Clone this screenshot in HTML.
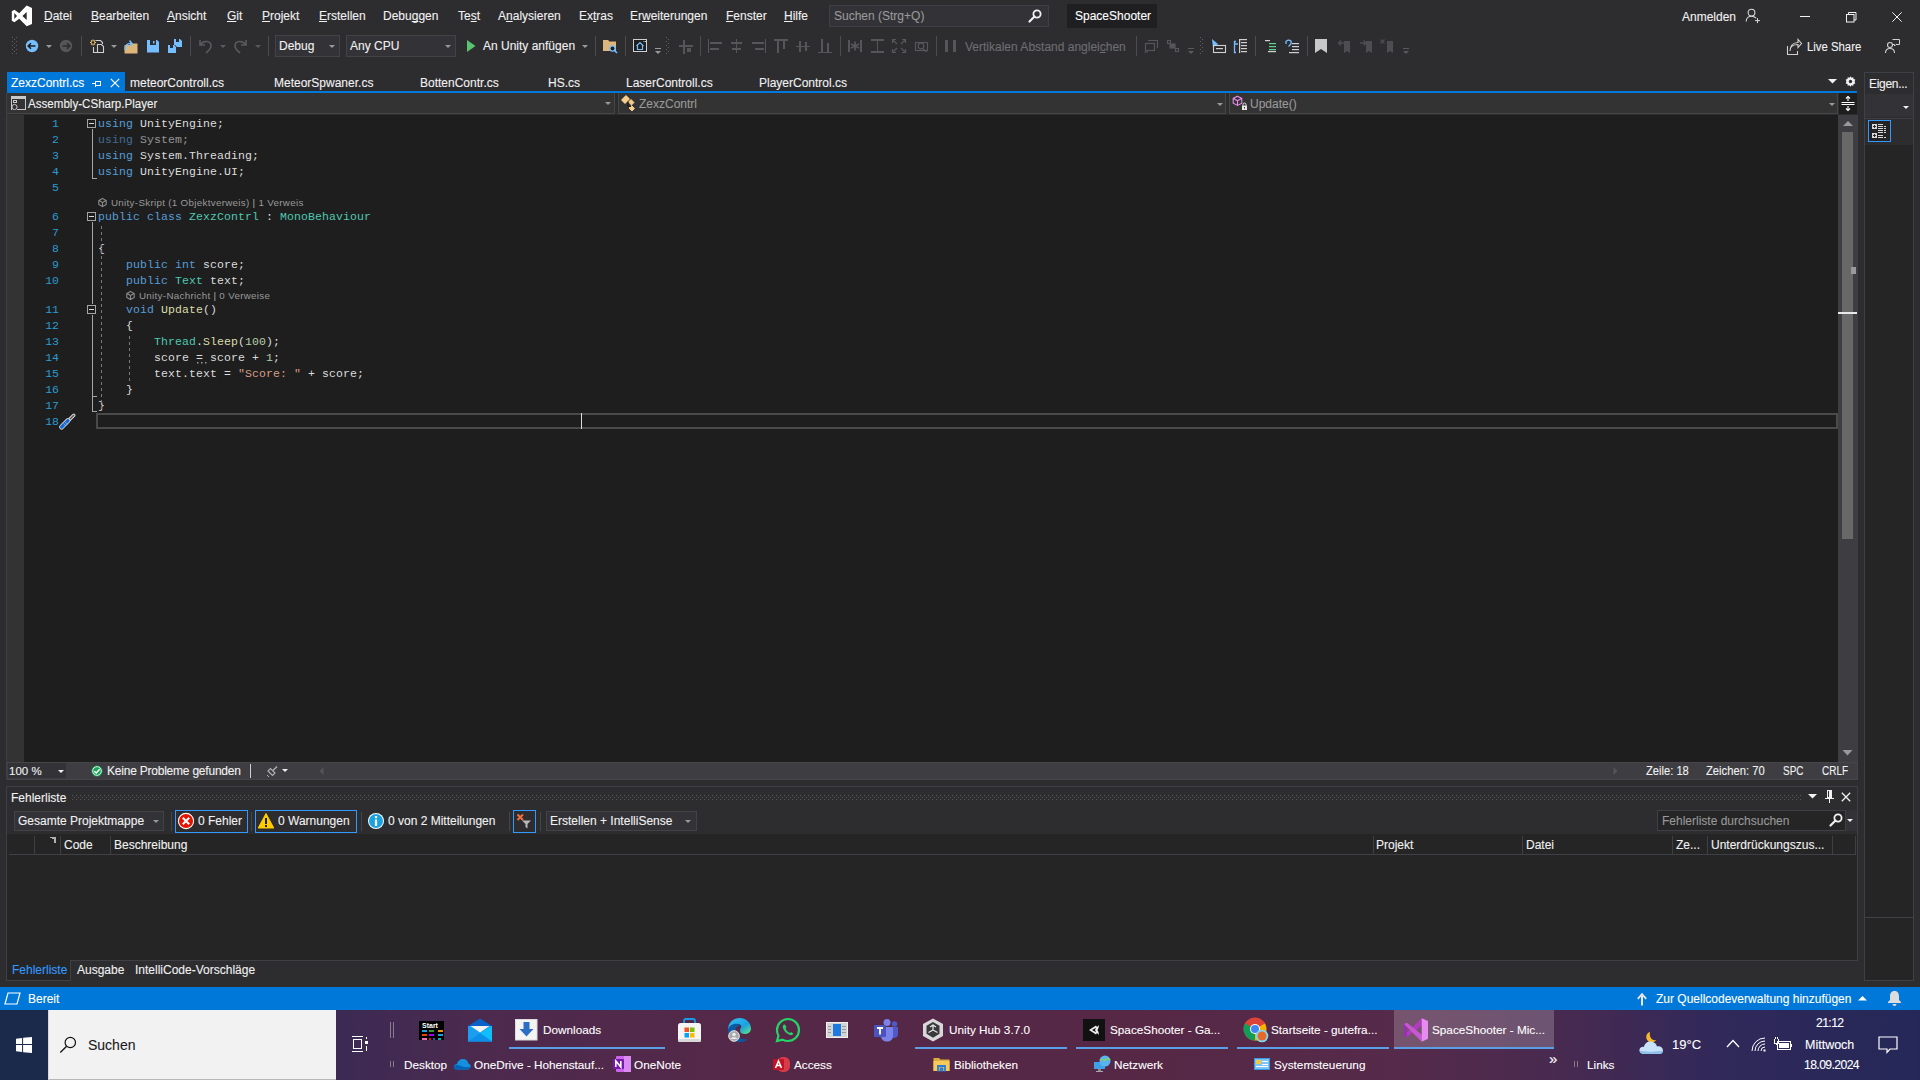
<!DOCTYPE html>
<html><head><meta charset="utf-8">
<style>
*{margin:0;padding:0;box-sizing:border-box}
html,body{width:1920px;height:1080px;overflow:hidden;background:#2d2d30;font-family:"Liberation Sans",sans-serif;font-size:12px;color:#f1f1f1}
.a{position:absolute}
.t{position:absolute;white-space:nowrap;line-height:14px;-webkit-text-stroke:0.1px currentColor}
.u{text-decoration:underline;text-underline-offset:1px;text-decoration-skip-ink:none}
.mono{font-family:"Liberation Mono",monospace}
svg{position:absolute;overflow:visible}
.sep{position:absolute;width:1px;background:#3f3f46}
.code .l{position:absolute;left:98px;white-space:pre;font-family:"Liberation Mono",monospace;font-size:11.5px;letter-spacing:0.1px;line-height:16px;color:#dcdcdc;margin-top:1px}
.ln{position:absolute;left:24px;width:35px;text-align:right;font-family:"Liberation Mono",monospace;font-size:11.5px;line-height:16px;color:#2b9bd0;margin-top:1px}
.kw{color:#569cd6}.ty{color:#4ec9b0}.me{color:#dcdcaa}.st{color:#d69d85}.nu{color:#b5cea8}.dim{opacity:.6}
.lens{position:absolute;font-size:9.8px;letter-spacing:0.3px;color:#999;white-space:nowrap;line-height:12px}
</style></head><body>

<!-- ============ TITLE / MENU BAR ============ -->
<div class="a" style="left:0;top:0;width:1920px;height:31px;background:#2d2d30"></div>
<svg style="left:0;top:0" width="40" height="32" viewBox="0 0 40 32"><path d="M26.7 5.6 L32 7.9 V24.1 L26.7 26.2 L19.2 18.7 L14.4 22.2 L11.8 20.8 V11.2 L14.4 9.8 L19.2 13.2 Z M26.7 12 L22.4 15.9 L26.7 19.9 Z M14.3 13 V18.9 L17 16 Z" fill="#fff" fill-rule="evenodd"/></svg>
<div class="t" style="left:44px;top:9px"><span class="u">D</span>atei</div>
<div class="t" style="left:91px;top:9px"><span class="u">B</span>earbeiten</div>
<div class="t" style="left:167px;top:9px"><span class="u">A</span>nsicht</div>
<div class="t" style="left:227px;top:9px"><span class="u">G</span>it</div>
<div class="t" style="left:262px;top:9px"><span class="u">P</span>rojekt</div>
<div class="t" style="left:319px;top:9px"><span class="u">E</span>rstellen</div>
<div class="t" style="left:383px;top:9px">Debu<span class="u">g</span>gen</div>
<div class="t" style="left:458px;top:9px">Te<span class="u">s</span>t</div>
<div class="t" style="left:498px;top:9px">A<span class="u">n</span>alysieren</div>
<div class="t" style="left:579px;top:9px">Ex<span class="u">t</span>ras</div>
<div class="t" style="left:630px;top:9px">Er<span class="u">w</span>eiterungen</div>
<div class="t" style="left:726px;top:9px"><span class="u">F</span>enster</div>
<div class="t" style="left:784px;top:9px"><span class="u">H</span>ilfe</div>
<!-- search -->
<div class="a" style="left:829px;top:5px;width:220px;height:22px;background:#333337;border:1px solid #3f3f46"></div>
<div class="t" style="left:834px;top:9px;color:#999999">Suchen (Strg+Q)</div>
<svg style="left:1028px;top:9px" width="14" height="14" viewBox="0 0 14 14"><circle cx="9" cy="5" r="3.6" fill="none" stroke="#f1f1f1" stroke-width="1.8"/><path d="M6.5 7.5 L1.5 12.5" stroke="#f1f1f1" stroke-width="2.2" stroke-linecap="round"/></svg>
<div class="a" style="left:1067px;top:4px;width:90px;height:24px;background:#1f1f22"></div>
<div class="t" style="left:1075px;top:9px;color:#fff">SpaceShooter</div>
<div class="t" style="left:1682px;top:10px">Anmelden</div>
<svg style="left:1745px;top:8px" width="16" height="16" viewBox="0 0 16 16"><circle cx="6.5" cy="4.6" r="3.4" fill="none" stroke="#d8d8d8" stroke-width="1.1"/><path d="M1.2 13.5 C1.2 10 3.5 8.3 6.5 8.3 C8.5 8.3 10 9 11 10.2" fill="none" stroke="#d8d8d8" stroke-width="1.1"/><path d="M10 12.6 H15 M12.5 10.1 V15.1" stroke="#d8d8d8" stroke-width="1"/></svg>
<div class="a" style="left:1800px;top:16px;width:10px;height:1px;background:#f1f1f1"></div>
<svg style="left:1846px;top:12px" width="11" height="11" viewBox="0 0 11 11"><rect x="0.5" y="2.5" width="7.5" height="7.5" fill="none" stroke="#f1f1f1"/><path d="M2.5 2.5 V0.5 H10 V8 H8" fill="none" stroke="#f1f1f1"/></svg>
<svg style="left:1892px;top:12px" width="10" height="10" viewBox="0 0 10 10"><path d="M0.3 0.3 L9.7 9.7 M9.7 0.3 L0.3 9.7" stroke="#f1f1f1" stroke-width="1"/></svg>

<!-- ============ TOOLBAR ============ -->
<!-- ============ TOOLBAR ============ -->
<svg style="left:0;top:0" width="1920" height="64" viewBox="0 0 1920 64" shape-rendering="crispEdges">
<g fill="#5f5f62">
<rect x="12" y="37" width="1" height="1"/><rect x="16" y="37" width="1" height="1"/><rect x="14" y="39" width="1" height="1"/>
<rect x="12" y="41" width="1" height="1"/><rect x="16" y="41" width="1" height="1"/><rect x="14" y="43" width="1" height="1"/>
<rect x="12" y="45" width="1" height="1"/><rect x="16" y="45" width="1" height="1"/><rect x="14" y="47" width="1" height="1"/>
<rect x="12" y="49" width="1" height="1"/><rect x="16" y="49" width="1" height="1"/><rect x="14" y="51" width="1" height="1"/>
<rect x="12" y="53" width="1" height="1"/><rect x="16" y="53" width="1" height="1"/>
</g>
<g fill="#4b4b50">
<rect x="81" y="36" width="1" height="20"/><rect x="190" y="36" width="1" height="20"/><rect x="268" y="36" width="1" height="20"/>
<rect x="595" y="36" width="1" height="20"/><rect x="625" y="36" width="1" height="20"/><rect x="700" y="36" width="1" height="20"/>
<rect x="840" y="36" width="1" height="20"/><rect x="936" y="36" width="1" height="20"/><rect x="1136" y="36" width="1" height="20"/>
<rect x="1255" y="36" width="1" height="20"/><rect x="1307" y="36" width="1" height="20"/>
</g>
<!-- grip 2 & 3 -->
<g fill="#5f5f62">
<rect x="666" y="37" width="1" height="1"/><rect x="668" y="39" width="1" height="1"/><rect x="666" y="41" width="1" height="1"/><rect x="668" y="43" width="1" height="1"/><rect x="666" y="45" width="1" height="1"/><rect x="668" y="47" width="1" height="1"/><rect x="666" y="49" width="1" height="1"/><rect x="668" y="51" width="1" height="1"/><rect x="666" y="53" width="1" height="1"/>
<rect x="1200" y="37" width="1" height="1"/><rect x="1202" y="39" width="1" height="1"/><rect x="1200" y="41" width="1" height="1"/><rect x="1202" y="43" width="1" height="1"/><rect x="1200" y="45" width="1" height="1"/><rect x="1202" y="47" width="1" height="1"/><rect x="1200" y="49" width="1" height="1"/><rect x="1202" y="51" width="1" height="1"/><rect x="1200" y="53" width="1" height="1"/>
</g>
</svg>
<svg style="left:0;top:0" width="1920" height="64" viewBox="0 0 1920 64">
<!-- back / forward -->
<circle cx="32" cy="46" r="6.2" fill="#75beff"/>
<path d="M35.5 46 H28.5 M31 43.2 L28.2 46 L31 48.8" fill="none" stroke="#1e1e1e" stroke-width="1.6"/>
<circle cx="66" cy="46" r="6.2" fill="#555558"/>
<path d="M62.5 46 H69.5 M67 43.2 L69.8 46 L67 48.8" fill="none" stroke="#2d2d30" stroke-width="1.6"/>
<!-- dropdown arrows -->
<g fill="#999999">
<path d="M46 45 H52 L49 48 Z"/><path d="M111 45 H117 L114 48 Z"/>
</g>
<g fill="#5a5a5e">
<path d="M220 45 H226 L223 48 Z"/><path d="M255 45 H261 L258 48 Z"/>
</g>
<!-- new project -->
<g fill="none" stroke="#d0d0d0" stroke-width="1.1">
<path d="M93.5 47 V52.5 H98" /><path d="M97.5 44.5 V52.5 H103.5 V46.5 L101.5 44.5 Z"/><path d="M95.5 40.5 H100.5 L102.5 42.5 V44"/>
</g>
<g stroke="#f2c46a" stroke-width="1.1"><path d="M90 42.5 H96 M93 39.5 V45.5 M91 40.5 L95 44.5 M95 40.5 L91 44.5"/></g>
<circle cx="93" cy="42.5" r="1.3" fill="#1e1e1e"/>
<!-- open folder -->
<path d="M124.5 45 H131 L132.5 43.5 H137.5 V53.5 H124.5 Z" fill="#dcb67a"/>
<path d="M125 50 Q125 43 131 43.5 M129.5 40.5 L132 43.5 L129.5 46" fill="none" stroke="#75beff" stroke-width="1.4"/>
<!-- save -->
<path d="M147 40 H150 V45 H156 V40 H157 L159 42 V52.5 H147 Z" fill="#75beff"/>
<rect x="153" y="41" width="1.5" height="2.5" fill="#75beff"/>
<!-- save all -->
<path d="M168 45 H170 V48 H173 V45 H174 L176 47 V53 H168 Z" fill="#75beff"/>
<path d="M174 39 H176 V42 H179 V39 H180 L182 41 V47 H177 L175 45 H174 Z" fill="#75beff"/>
<!-- undo / redo -->
<path d="M200 40 V45 H205 M200.5 44.5 C203 40.5 211 40 211 46 C211 49 208 51 206 53" fill="none" stroke="#5a5a5e" stroke-width="1.6"/>
<path d="M246 40 V45 H241 M245.5 44.5 C243 40.5 235 40 235 46 C235 49 238 51 240 53" fill="none" stroke="#5a5a5e" stroke-width="1.6"/>
<!-- play -->
<path d="M467 40 L475.5 46 L467 52 Z" fill="#58c46e"/>
<path d="M582 45 H588 L585 48 Z" fill="#999"/>
<!-- folder search -->
<path d="M603 40 H608 L609.5 41.5 H616 V51 H603 Z" fill="#dcb67a"/>
<circle cx="612.5" cy="48.5" r="2.6" fill="#1e1e1e" stroke="#75beff" stroke-width="1.3"/>
<path d="M614.3 50.3 L617 53" stroke="#75beff" stroke-width="1.6"/>
<!-- home box -->
<rect x="633.5" y="39.5" width="13" height="12" fill="#1e1e1e" stroke="#d0d0d0" stroke-width="1"/>
<path d="M636.5 46 L640 42.5 L643.5 46 M637.5 45.5 V49.5 H642.5 V45.5" fill="none" stroke="#75beff" stroke-width="1.2"/>
<rect x="643.5" y="41" width="1" height="1" fill="#d0d0d0"/><rect x="645" y="41" width="1" height="1" fill="#d0d0d0"/>
<!-- small dropdown with line -->
<g fill="#999"><rect x="655" y="48" width="6" height="1"/><path d="M655 51 H661 L658 54 Z"/></g>
<g fill="#5a5a5e"><rect x="1188" y="48" width="6" height="1"/><path d="M1188 51 H1194 L1191 54 Z"/>
<rect x="1403" y="48" width="6" height="1"/><path d="M1403 51 H1409 L1406 54 Z"/></g>
<!-- grey design icons -->
<g fill="#55555a">
<rect x="679" y="45" width="14" height="2"/><rect x="683" y="40" width="2" height="14"/><rect x="687" y="48" width="4" height="4"/>
<rect x="708" y="39" width="1" height="14"/><rect x="710" y="42" width="12" height="2"/><rect x="710" y="48" width="9" height="2"/>
<rect x="736" y="39" width="1" height="14"/><rect x="731" y="42" width="11" height="2"/><rect x="732" y="48" width="9" height="2"/>
<rect x="765" y="39" width="1" height="14"/><rect x="752" y="42" width="12" height="2"/><rect x="755" y="48" width="9" height="2"/>
<rect x="774" y="39" width="14" height="2"/><rect x="777" y="41" width="2" height="12"/><rect x="783" y="41" width="2" height="8"/>
<rect x="796" y="46" width="14" height="1"/><rect x="799" y="41" width="2" height="11"/><rect x="805" y="42" width="2" height="9"/>
<rect x="818" y="52" width="14" height="1"/><rect x="821" y="39" width="2" height="13"/><rect x="827" y="43" width="2" height="9"/>
<rect x="848" y="40" width="2" height="12"/><rect x="860" y="40" width="2" height="12"/>
<rect x="871" y="39" width="13" height="2"/><rect x="871" y="51" width="13" height="2"/><rect x="877" y="41" width="1" height="10"/>
<rect x="945" y="40" width="3" height="12"/><rect x="953" y="40" width="3" height="12"/>
</g>
<path d="M855 41.5 V50.5 M851 44 L859 48 M859 44 L851 48" stroke="#55555a" stroke-width="1.8"/>
<g fill="none" stroke="#55555a" stroke-width="1.2">
<path d="M892.5 43 V39.5 H896 M902 39.5 H905.5 V43 M905.5 49 V52.5 H902 M896 52.5 H892.5 V49 M893 40 L897 44 M905 40 L901 44 M893 52 L897 48 M905 52 L901 48"/>
<rect x="915.5" y="42.5" width="12" height="8"/><circle cx="921" cy="46" r="2.8"/><path d="M923 48.5 L926.5 52"/>
<rect x="1145.5" y="43.5" width="9" height="7"/><path d="M1148 40.5 H1157.5 V48"/><path d="M1144.5 52 H1148"/>
<rect x="1167.5" y="40.5" width="3" height="3"/><rect x="1175.5" y="48.5" width="3" height="3"/><rect x="1170" y="44" width="5" height="4" fill="#55555a"/>
</g>

<path d="M1315 39 H1327 V53 L1321 49 L1315 53 Z" fill="#c8c8c8"/>
<g fill="#4e4e52">
<path d="M1344 41 H1350 V53 L1347 51 L1344 53 Z"/><path d="M1366 41 H1372 V53 L1369 51 L1366 53 Z"/><path d="M1387 41 H1393 V53 L1390 51 L1387 53 Z"/>
</g>
<g fill="none" stroke="#4e4e52" stroke-width="1.3">
<path d="M1345 43 H1338.5 M1341 40.5 L1338.5 43 L1341 45.5"/><path d="M1360 43 H1366 M1363.5 40.5 L1366 43 L1363.5 45.5"/><path d="M1380.5 39.5 L1384.5 43.5 M1384.5 39.5 L1380.5 43.5"/>
</g>
<!-- cursor icon -->
<path d="M1212 39 L1218.5 44.5 L1215.5 45 L1213 47.5 Z" fill="#75beff"/>
<rect x="1213.5" y="45.5" width="12" height="7" fill="none" stroke="#d0d0d0" stroke-width="1.1"/><rect x="1216" y="48" width="7" height="1.2" fill="#d0d0d0"/>
<path d="M1236 41.5 H1234.5 V52.5 H1236 M1234.5 44 H1238" fill="none" stroke="#75beff" stroke-width="1.3"/>
<g fill="#d0d0d0"><rect x="1239" y="39" width="1.2" height="14"/><rect x="1240" y="39" width="7" height="1.2"/><rect x="1241" y="42" width="6" height="1.2"/><rect x="1241" y="45" width="6" height="1.2"/><rect x="1241" y="48" width="6" height="1.2"/><rect x="1241" y="51" width="6" height="1.2"/></g>
<g fill="#d0d0d0"><rect x="1265" y="40" width="5" height="1.2"/><rect x="1268" y="51" width="8" height="1.2"/></g>
<g fill="#5fd38d"><rect x="1269" y="43" width="7" height="1.2"/><rect x="1269" y="46" width="7" height="1.2"/><rect x="1269" y="49" width="7" height="1.2"/></g>
<path d="M1286 41.5 C1289 39 1292 40.5 1291 43.5 C1290.5 45 1289 45.5 1288.5 46.5 M1286 41 V44" fill="none" stroke="#75beff" stroke-width="1.3"/>
<g fill="#d0d0d0"><rect x="1292" y="43" width="7" height="1.2"/><rect x="1292" y="46" width="7" height="1.2"/><rect x="1292" y="49" width="7" height="1.2"/><rect x="1289" y="52" width="10" height="1.2"/></g>
<!-- live share -->
<path d="M1787.5 46 V54.5 H1797.5 V51" fill="none" stroke="#d0d0d0" stroke-width="1.1"/>
<path d="M1790 51 C1790 46 1794 44.5 1798 44.5 V47.5 L1801.5 43.5 L1798 39.5 V42.5 C1793 42.5 1790 46 1790 51 Z" fill="none" stroke="#d0d0d0" stroke-width="1.1"/>
<!-- feedback -->
<circle cx="1890" cy="45" r="2.5" fill="none" stroke="#d0d0d0" stroke-width="1.1"/>
<path d="M1885.5 53 C1885.5 49.5 1887.5 48.5 1890 48.5 C1892.5 48.5 1894.5 49.5 1894.5 53" fill="none" stroke="#d0d0d0" stroke-width="1.1"/>
<path d="M1892.5 39.5 H1899.5 V44.5 H1896 L1894.5 46 V44.5 H1892.5" fill="none" stroke="#d0d0d0" stroke-width="1"/>
</svg>
<div class="a" style="left:275px;top:35px;width:65px;height:22px;background:#333337;border:1px solid #434346"></div>
<div class="t" style="left:279px;top:39px">Debug</div>
<svg style="left:329px;top:45px" width="7" height="4"><path d="M0 0 H6 L3 3 Z" fill="#999"/></svg>
<div class="a" style="left:346px;top:35px;width:110px;height:22px;background:#333337;border:1px solid #434346"></div>
<div class="t" style="left:350px;top:39px">Any CPU</div>
<svg style="left:445px;top:45px" width="7" height="4"><path d="M0 0 H6 L3 3 Z" fill="#999"/></svg>
<div class="t" style="left:483px;top:39px">An Unity anfügen</div>
<div class="t" style="left:965px;top:40px;color:#6d6d70">Vertikalen Abstand anglei<span class="u">c</span>hen</div>
<div class="t" style="left:1807px;top:40px;transform:scaleX(0.946);transform-origin:0 0">Live Share</div>


<!-- ============ RIGHT PANEL ============ -->
<div class="a" style="left:1864px;top:72px;width:50px;height:909px;background:#252526;border:1px solid #3f3f46"></div>
<div class="a" style="left:1865px;top:73px;width:48px;height:72px;background:#2d2d30"></div>
<!-- ============ TABS ============ -->
<div class="a" style="left:7px;top:72px;width:118px;height:21px;background:#0078d9"></div>
<div class="t" style="left:11px;top:76px;color:#fff">ZexzContrl.cs</div>
<div class="t" style="left:130px;top:76px">meteorControll.cs</div>
<div class="t" style="left:274px;top:76px">MeteorSpwaner.cs</div>
<div class="t" style="left:420px;top:76px">BottenContr.cs</div>
<div class="t" style="left:548px;top:76px">HS.cs</div>
<div class="t" style="left:626px;top:76px">LaserControll.cs</div>
<div class="t" style="left:759px;top:76px">PlayerControl.cs</div>
<div class="a" style="left:7px;top:91px;width:1850px;height:2px;background:#0078d9"></div>

<!-- ============ NAV BAR ============ -->
<div class="a" style="left:7px;top:93px;width:1850px;height:22px;background:#2d2d30"></div>
<div class="a" style="left:7px;top:93px;width:608px;height:21px;background:#333333;border-right:1px solid #464646;border-bottom:1px solid #464646"></div>
<div class="a" style="left:618px;top:93px;width:608px;height:21px;background:#333333;border-left:1px solid #464646;border-right:1px solid #464646;border-bottom:1px solid #464646"></div>
<div class="a" style="left:1229px;top:93px;width:609px;height:21px;background:#333333;border-left:1px solid #464646;border-right:1px solid #464646;border-bottom:1px solid #464646"></div>
<div class="a" style="left:1839px;top:93px;width:18px;height:21px;background:#1e1e1e"></div>
<div class="t" style="left:28px;top:97px;transform:scaleX(0.965);transform-origin:0 0">Assembly-CSharp.Player</div>
<div class="t" style="left:639px;top:97px;color:#999">ZexzContrl</div>
<div class="t" style="left:1250px;top:97px;color:#999">Update()</div>

<!-- ============ EDITOR ============ -->
<div class="a" style="left:6px;top:93px;width:1px;height:687px;background:#3f3f46"></div>
<div class="a" style="left:7px;top:115px;width:17px;height:647px;background:#333333"></div>
<div class="a" style="left:24px;top:115px;width:1814px;height:647px;background:#1e1e1e"></div>
<div class="a" style="left:1838px;top:115px;width:20px;height:647px;background:#3e3e42"></div>
<div class="code">
<!-- line numbers -->
<div class="ln" style="top:115px">1</div>
<div class="ln" style="top:131px">2</div>
<div class="ln" style="top:147px">3</div>
<div class="ln" style="top:163px">4</div>
<div class="ln" style="top:179px">5</div>
<div class="ln" style="top:208px">6</div>
<div class="ln" style="top:224px">7</div>
<div class="ln" style="top:240px">8</div>
<div class="ln" style="top:256px">9</div>
<div class="ln" style="top:272px">10</div>
<div class="ln" style="top:301px">11</div>
<div class="ln" style="top:317px">12</div>
<div class="ln" style="top:333px">13</div>
<div class="ln" style="top:349px">14</div>
<div class="ln" style="top:365px">15</div>
<div class="ln" style="top:381px">16</div>
<div class="ln" style="top:397px">17</div>
<div class="ln" style="top:413px">18</div>
<!-- current line box -->
<div class="a" style="left:96px;top:413px;width:1742px;height:16px;border:2px solid #4a4a4a"></div>
<div class="a" style="left:581px;top:413px;width:1px;height:16px;background:#dcdcdc"></div>
<!-- code -->
<div class="l" style="top:115px"><span class="kw">using</span> UnityEngine;</div>
<div class="l" style="top:131px;opacity:.62"><span class="kw">using</span> System;</div>
<div class="l" style="top:147px"><span class="kw">using</span> System.Threading;</div>
<div class="l" style="top:163px"><span class="kw">using</span> UnityEngine.UI;</div>
<div class="l" style="top:208px"><span class="kw">public</span> <span class="kw">class</span> <span class="ty">ZexzContrl</span> : <span class="ty">MonoBehaviour</span></div>
<div class="l" style="top:240px">{</div>
<div class="l" style="top:256px">    <span class="kw">public</span> <span class="kw">int</span> score;</div>
<div class="l" style="top:272px">    <span class="kw">public</span> <span class="ty">Text</span> text;</div>
<div class="l" style="top:301px">    <span class="kw">void</span> <span class="me">Update</span>()</div>
<div class="l" style="top:317px">    {</div>
<div class="l" style="top:333px">        <span class="ty">Thread</span>.<span class="me">Sleep</span>(<span class="nu">100</span>);</div>
<div class="l" style="top:349px">        score = score + <span class="nu">1</span>;</div>
<div class="l" style="top:365px">        text.text = <span class="st">"Score: "</span> + score;</div>
<div class="l" style="top:381px">    }</div>
<div class="l" style="top:397px">}</div>
<!-- dots under = -->
<svg style="left:196px;top:362px" width="12" height="2"><rect x="1" y="0" width="1.5" height="1.5" fill="#999"/><rect x="5" y="0" width="1.5" height="1.5" fill="#999"/><rect x="9" y="0" width="1.5" height="1.5" fill="#999"/></svg>
<!-- outlining -->
<svg style="left:0;top:0" width="200" height="440" viewBox="0 0 200 440" shape-rendering="crispEdges">
<g fill="none" stroke="#a5a5a5" stroke-width="1">
<rect x="87.5" y="119.5" width="8" height="8"/>
<rect x="87.5" y="212.5" width="8" height="8"/>
<rect x="87.5" y="305.5" width="8" height="8"/>
<path d="M92.5 129 V178.5 H97"/>
<path d="M92.5 222 V304"/><path d="M92.5 315 V396.5 H97"/><path d="M92.5 397 V411.5 H97"/>
</g>
<g fill="#1e1e1e"><rect x="88" y="120" width="7" height="7"/><rect x="88" y="213" width="7" height="7"/><rect x="88" y="306" width="7" height="7"/></g>
<g fill="#d8d8d8"><rect x="89" y="123" width="5" height="1"/><rect x="89" y="216" width="5" height="1"/><rect x="89" y="309" width="5" height="1"/></g>
<g stroke="#7a7a7a" stroke-width="1" stroke-dasharray="3 3">
<path d="M101.5 226 V412"/>
<path d="M129.5 336 V381"/>
</g>
</svg>
<!-- codelens -->
<svg style="left:98px;top:198px" width="9" height="9" viewBox="0 0 9 9"><path d="M4.5 0.5 L8.2 2.5 V6.5 L4.5 8.5 L0.8 6.5 V2.5 Z M4.5 4.5 V8.3 M4.5 4.5 L8 2.6 M4.5 4.5 L1 2.6" fill="none" stroke="#8a8a8a" stroke-width="1.1"/></svg>
<div class="lens" style="left:111px;top:197px">Unity-Skript (1 Objektverweis) <span style="color:#aaa">|</span> 1 Verweis</div>
<svg style="left:126px;top:291px" width="9" height="9" viewBox="0 0 9 9"><path d="M4.5 0.5 L8.2 2.5 V6.5 L4.5 8.5 L0.8 6.5 V2.5 Z M4.5 4.5 V8.3 M4.5 4.5 L8 2.6 M4.5 4.5 L1 2.6" fill="none" stroke="#8a8a8a" stroke-width="1.1"/></svg>
<div class="lens" style="left:139px;top:290px">Unity-Nachricht <span style="color:#aaa">|</span> 0 Verweise</div>
<!-- quick action screwdriver -->
<svg style="left:59px;top:411px" width="18" height="18" viewBox="0 0 18 18">
<path d="M9.5 9.5 L14.8 4.2" stroke="#d8d8d8" stroke-width="3.4" stroke-linecap="round"/>
<path d="M9.5 9.5 L14.8 4.2" stroke="#555" stroke-width="1.4" stroke-linecap="round"/>
<path d="M2.6 16 L9 9.6" stroke="#d8d8d8" stroke-width="5" stroke-linecap="round"/>
<path d="M2.6 16 L9 9.6" stroke="#1a6ad0" stroke-width="3.4" stroke-linecap="round"/>
<path d="M4.5 12.5 L7 15 M6 11 L8.5 13.5" stroke="#9cc4f0" stroke-width="0.6"/>
</svg>
</div>

<!-- ============ EDITOR STATUS STRIP ============ -->
<div class="a" style="left:7px;top:762px;width:1851px;height:18px;background:#3e3e42;border-top:1px solid #46464a;border-bottom:1px solid #46464a;border-right:1px solid #46464a"></div>

<!-- tab icons -->
<svg style="left:92px;top:79px" width="9" height="9" viewBox="0 0 9 9" shape-rendering="crispEdges"><path d="M0 4.5 H3 M3.5 1.5 V7.5 M3.5 2.5 H8.5 V6.5 H3.5" fill="none" stroke="#fff" stroke-width="1"/></svg>
<svg style="left:110px;top:78px" width="10" height="10" viewBox="0 0 10 10"><path d="M0.8 0.8 L9.2 9.2 M9.2 0.8 L0.8 9.2" stroke="#fff" stroke-width="1.2"/></svg>
<svg style="left:1828px;top:79px" width="9" height="5" viewBox="0 0 9 5"><path d="M0 0 H9 L4.5 4.5 Z" fill="#f1f1f1"/></svg>
<svg style="left:1845px;top:76px" width="11" height="11" viewBox="0 0 11 11"><path d="M5.5 0.3 L6.5 1.8 L8.3 1.2 L8.5 3 L10.3 3.6 L9.6 5.5 L10.3 7.4 L8.5 8 L8.3 9.8 L6.5 9.2 L5.5 10.7 L4.5 9.2 L2.7 9.8 L2.5 8 L0.7 7.4 L1.4 5.5 L0.7 3.6 L2.5 3 L2.7 1.2 L4.5 1.8 Z" fill="#f1f1f1"/><circle cx="5.5" cy="5.5" r="1.7" fill="#2d2d30"/></svg>
<!-- right panel header -->
<div class="t" style="left:1869px;top:77px;letter-spacing:-0.3px">Eigen...</div>
<div class="a" style="left:1865px;top:94px;width:48px;height:23px;background:#333337"></div>
<svg style="left:1903px;top:106px" width="7" height="4"><path d="M0 0 H6 L3 3 Z" fill="#f1f1f1"/></svg>
<div class="a" style="left:1865px;top:118px;width:48px;height:1px;background:#3f3f46"></div>
<div class="a" style="left:1868px;top:120px;width:23px;height:22px;border:1px solid #3399ff;background:#232325"></div>
<svg style="left:1871px;top:123px" width="17" height="17" viewBox="0 0 17 17" shape-rendering="crispEdges">
<g fill="#d8d8d8"><rect x="1" y="1" width="5" height="5"/><rect x="1" y="10" width="5" height="5"/><rect x="7" y="1" width="5" height="1"/><rect x="7" y="3" width="5" height="1"/><rect x="7" y="5" width="5" height="1"/><rect x="7" y="7" width="5" height="1"/><rect x="7" y="9" width="5" height="1"/><rect x="7" y="12" width="5" height="1"/><rect x="7" y="14" width="5" height="1"/><rect x="13" y="3" width="2" height="1"/><rect x="13" y="5" width="2" height="1"/><rect x="13" y="7" width="2" height="1"/><rect x="13" y="9" width="2" height="1"/><rect x="13" y="14" width="2" height="1"/></g>
<g fill="#2d2d30"><rect x="3" y="2" width="1" height="3"/><rect x="2" y="3" width="3" height="1"/><rect x="3" y="11" width="1" height="3"/><rect x="2" y="12" width="3" height="1"/></g>
</svg>
<div class="a" style="left:1865px;top:917px;width:48px;height:1px;background:#3f3f46"></div>
<!-- nav icons -->
<svg style="left:11px;top:96px" width="15" height="15" viewBox="0 0 15 15" shape-rendering="crispEdges">
<rect x="0.5" y="0.5" width="14" height="13" fill="none" stroke="#c8c8c8"/><rect x="1" y="1" width="13" height="2" fill="#c8c8c8"/>
<rect x="1" y="3" width="5" height="11" fill="#2d2d30"/><rect x="2" y="4" width="3" height="2" fill="none" stroke="#c8c8c8"/>
<circle cx="3.5" cy="11" r="2.6" fill="#333337" stroke="#c8c8c8" shape-rendering="auto"/>
</svg>
<svg style="left:605px;top:102px" width="7" height="4"><path d="M0 0 H6 L3 3 Z" fill="#999"/></svg>
<svg style="left:1217px;top:103px" width="7" height="4"><path d="M0 0 H6 L3 3 Z" fill="#999"/></svg>
<svg style="left:1829px;top:103px" width="7" height="4"><path d="M0 0 H6 L3 3 Z" fill="#999"/></svg>
<svg style="left:621px;top:95px" width="16" height="16" viewBox="0 0 16 16">
<path d="M1 5 L5 1 L8 4 L4 8 Z" fill="#f7cd8b" stroke="#f7cd8b" stroke-width="1.5" stroke-linejoin="round"/>
<path d="M10 4.5 L13 7.5 L10.5 10 L7.5 7 Z" fill="#f7cd8b" stroke="#f7cd8b" stroke-width="1" stroke-linejoin="round"/>
<path d="M10.5 10.5 L13.5 13.5 L11 16 L8 13 Z" fill="#f7cd8b" stroke="#f7cd8b" stroke-width="1" stroke-linejoin="round"/>
<path d="M7 6.5 V11.5 H10" fill="none" stroke="#1e1e1e" stroke-width="1.2"/>
</svg>
<svg style="left:1232px;top:95px" width="16" height="16" viewBox="0 0 16 16"><path d="M5.5 1.2 L9.8 3.4 V8.2 L5.5 10.4 L1.2 8.2 V3.4 Z M5.5 5.8 V10.2 M5.5 5.8 L9.6 3.5 M5.5 5.8 L1.4 3.5" fill="none" stroke="#e58ae8" stroke-width="1.1"/><rect x="10" y="10.5" width="5" height="4.5" fill="#e8e8e8"/><path d="M11 10.5 V9.5 A1.5 1.5 0 0 1 14 9.5 V10.5" fill="none" stroke="#e8e8e8" stroke-width="1"/><rect x="12" y="12" width="1" height="1.5" fill="#333"/></svg>
<svg style="left:1839px;top:93px" width="18" height="21" viewBox="0 0 18 21"><path d="M2.5 9.5 H15.5 M2.5 11.5 H15.5" stroke="#fff" stroke-width="1.1"/><path d="M9 3.5 V8 M9 13 V17.5" stroke="#fff" stroke-width="1.1"/><path d="M7 5.5 L9 3.5 L11 5.5 M7 15.5 L9 17.5 L11 15.5" fill="none" stroke="#fff" stroke-width="1.1"/></svg>
<!-- scrollbar -->
<svg style="left:1843px;top:120px" width="10" height="7"><path d="M0 6 L5 1 L10 6 Z" fill="#999"/></svg>
<div class="a" style="left:1842px;top:132px;width:11px;height:407px;background:#686868"></div>
<div class="a" style="left:1851px;top:267px;width:5px;height:7px;background:#9a9a9a"></div>
<div class="a" style="left:1838px;top:312px;width:19px;height:2px;background:#e8e8e8"></div>
<svg style="left:1842px;top:749px" width="11" height="8"><path d="M0.5 1 L5.5 6.5 L10.5 1 Z" fill="#999"/></svg>

<!-- editor status strip -->
<div class="a" style="left:8px;top:763px;width:58px;height:15px;background:#333337"></div>
<div class="t" style="left:9px;top:764px;font-size:11.5px">100 %</div>
<svg style="left:58px;top:770px" width="7" height="4"><path d="M0 0 H6 L3 3 Z" fill="#f1f1f1"/></svg>
<svg style="left:91px;top:765px" width="12" height="12" viewBox="0 0 12 12"><circle cx="6" cy="6" r="5.5" fill="#1ba25b"/><circle cx="6" cy="6" r="4.3" fill="none" stroke="#e8f5ec" stroke-width="0.9"/><path d="M3.3 6.2 L5.2 8 L8.7 4.3" fill="none" stroke="#fff" stroke-width="1.5"/></svg>
<div class="t" style="left:107px;top:764px;letter-spacing:-0.22px">Keine Probleme gefunden</div>
<div class="a" style="left:250px;top:764px;width:1px;height:14px;background:#d0d0d0"></div>
<svg style="left:265px;top:765px" width="14" height="13" viewBox="0 0 14 13"><path d="M3 6 L7.5 10.5 L10 8 L5.5 3.5 Z" fill="none" stroke="#b0b0b0" stroke-width="1.2"/><path d="M8 5.5 L12 1.5" stroke="#b0b0b0" stroke-width="1.4"/><path d="M2 10 L4 12" stroke="#b0b0b0"/></svg>
<svg style="left:282px;top:769px" width="7" height="4"><path d="M0 0 H6 L3 3 Z" fill="#f1f1f1"/></svg>
<svg style="left:319px;top:767px" width="5" height="8"><path d="M4.5 0 V8 L0.5 4 Z" fill="#555"/></svg>
<svg style="left:1613px;top:767px" width="5" height="8"><path d="M0.5 0 V8 L4.5 4 Z" fill="#555"/></svg>
<div class="t" style="left:1646px;top:764px;transform:scaleX(0.93);transform-origin:0 0">Zeile: 18</div>
<div class="t" style="left:1706px;top:764px;transform:scaleX(0.935);transform-origin:0 0">Zeichen: 70</div>
<div class="t" style="left:1783px;top:764px;transform:scaleX(0.83);transform-origin:0 0">SPC</div>
<div class="t" style="left:1822px;top:764px;transform:scaleX(0.83);transform-origin:0 0">CRLF</div>

<!-- ============ FEHLERLISTE PANEL ============ -->
<div class="a" style="left:6px;top:786px;width:1852px;height:175px;background:#2d2d30;border:1px solid #3f3f46"></div>
<div class="a" style="left:7px;top:834px;width:1850px;height:126px;background:#252526"></div>
<div class="t" style="left:11px;top:791px">Fehlerliste</div>
<svg style="left:72px;top:795px" width="1730" height="5" shape-rendering="crispEdges"><defs><pattern id="grip" width="4" height="4" patternUnits="userSpaceOnUse"><rect x="0" y="0" width="1" height="1" fill="#58585c"/><rect x="2" y="2" width="1" height="1" fill="#58585c"/></pattern></defs><rect width="1730" height="5" fill="url(#grip)"/></svg>
<svg style="left:1808px;top:794px" width="9" height="5"><path d="M0 0 H9 L4.5 4.5 Z" fill="#f1f1f1"/></svg>
<svg style="left:1825px;top:790px" width="9" height="14" viewBox="0 0 9 14" shape-rendering="crispEdges"><path d="M2.5 0.5 H6.5 V7.5 H2.5 Z M0 8 H9 M4.5 8 V13" fill="none" stroke="#f1f1f1" stroke-width="1"/><rect x="4" y="1" width="2" height="6" fill="#f1f1f1"/></svg>
<svg style="left:1841px;top:792px" width="10" height="10" viewBox="0 0 10 10"><path d="M0.8 0.8 L9.2 9.2 M9.2 0.8 L0.8 9.2" stroke="#f1f1f1" stroke-width="1.3"/></svg>
<!-- toolbar -->
<div class="a" style="left:14px;top:811px;width:150px;height:20px;background:#333337;border:1px solid #434346"></div>
<div class="t" style="left:18px;top:814px">Gesamte Projektmappe</div>
<svg style="left:153px;top:820px" width="7" height="4"><path d="M0 0 H6 L3 3 Z" fill="#999"/></svg>
<div class="a" style="left:171px;top:812px;width:1px;height:19px;background:#46464a"></div>
<div class="a" style="left:175px;top:810px;width:73px;height:23px;border:1px solid #3399ff"></div>
<svg style="left:177px;top:812px" width="18" height="18" viewBox="0 0 18 18"><circle cx="9" cy="9" r="7.6" fill="#e51400" stroke="#fff" stroke-width="1.1"/><path d="M5.8 5.8 L12.2 12.2 M12.2 5.8 L5.8 12.2" stroke="#fff" stroke-width="2"/></svg>
<div class="t" style="left:198px;top:814px">0 Fehler</div>
<div class="a" style="left:251px;top:812px;width:1px;height:19px;background:#46464a"></div>
<div class="a" style="left:255px;top:810px;width:102px;height:23px;border:1px solid #3399ff"></div>
<svg style="left:257px;top:812px" width="18" height="18" viewBox="0 0 18 18"><path d="M9 1.5 L16.8 16 H1.2 Z" fill="#ffcc00" stroke="#ffcc00" stroke-width="1" stroke-linejoin="round"/><rect x="8" y="6" width="2" height="6" fill="#1e1e1e"/><rect x="8" y="13" width="2" height="2" fill="#1e1e1e"/></svg>
<div class="t" style="left:278px;top:814px">0 Warnungen</div>
<div class="a" style="left:361px;top:812px;width:1px;height:19px;background:#46464a"></div>
<svg style="left:367px;top:812px" width="18" height="18" viewBox="0 0 18 18"><circle cx="9" cy="9" r="8" fill="#fff"/><circle cx="9" cy="9" r="7" fill="#1aa1e2"/><rect x="7.9" y="7.5" width="2.2" height="6.5" fill="#fff"/><rect x="7.9" y="4" width="2.2" height="2.2" fill="#fff"/></svg>
<div class="t" style="left:388px;top:814px">0 von 2 Mitteilungen</div>
<div class="a" style="left:509px;top:812px;width:1px;height:19px;background:#46464a"></div>
<div class="a" style="left:513px;top:810px;width:23px;height:23px;border:1px solid #3399ff"></div>
<svg style="left:516px;top:813px" width="17" height="17" viewBox="0 0 17 17"><path d="M1.5 1.5 L7 7 M7 1.5 L1.5 7" stroke="#f0703c" stroke-width="2"/><path d="M6 7.5 H15 L11.5 11 V15.5 L9.5 14 V11 Z" fill="#b8b8b8"/></svg>
<div class="a" style="left:540px;top:812px;width:1px;height:19px;background:#46464a"></div>
<div class="a" style="left:546px;top:811px;width:151px;height:20px;background:#333337;border:1px solid #434346"></div>
<div class="t" style="left:550px;top:814px">Erstellen + IntelliSense</div>
<svg style="left:685px;top:820px" width="7" height="4"><path d="M0 0 H6 L3 3 Z" fill="#999"/></svg>
<div class="a" style="left:1657px;top:810px;width:189px;height:21px;background:#252526;border:1px solid #3f3f46"></div>
<div class="t" style="left:1662px;top:814px;color:#999">Fehlerliste durchsuchen</div>
<svg style="left:1829px;top:813px" width="14" height="14" viewBox="0 0 14 14"><circle cx="9" cy="5" r="3.6" fill="none" stroke="#f1f1f1" stroke-width="1.8"/><path d="M6.5 7.5 L1.5 12.5" stroke="#f1f1f1" stroke-width="2.2" stroke-linecap="round"/></svg>
<div class="a" style="left:1846px;top:810px;width:11px;height:21px;background:#333337"></div>
<svg style="left:1847px;top:819px" width="7" height="4"><path d="M0 0 H6 L3 3 Z" fill="#f1f1f1"/></svg>
<!-- header -->
<div class="a" style="left:9px;top:854px;width:1847px;height:1px;background:#3f3f46"></div>
<div class="a" style="left:34px;top:836px;width:1px;height:18px;background:#3f3f46"></div>
<div class="a" style="left:60px;top:836px;width:1px;height:18px;background:#3f3f46"></div>
<div class="a" style="left:110px;top:836px;width:1px;height:18px;background:#3f3f46"></div>
<div class="a" style="left:1373px;top:836px;width:1px;height:18px;background:#3f3f46"></div>
<div class="a" style="left:1522px;top:836px;width:1px;height:18px;background:#3f3f46"></div>
<div class="a" style="left:1672px;top:836px;width:1px;height:18px;background:#3f3f46"></div>
<div class="a" style="left:1707px;top:836px;width:1px;height:18px;background:#3f3f46"></div>
<div class="a" style="left:1832px;top:836px;width:1px;height:18px;background:#3f3f46"></div>
<div class="a" style="left:1855px;top:836px;width:1px;height:18px;background:#3f3f46"></div>
<svg style="left:50px;top:837px" width="7" height="7" viewBox="0 0 7 7" shape-rendering="crispEdges"><g fill="#b0b0b0"><rect x="0" y="0" width="6" height="1"/><rect x="2" y="1" width="4" height="1"/><rect x="4" y="2" width="2" height="4"/></g></svg>
<div class="t" style="left:64px;top:838px">Code</div>
<div class="t" style="left:114px;top:838px">Beschreibung</div>
<div class="t" style="left:1376px;top:838px">Projekt</div>
<div class="t" style="left:1526px;top:838px">Datei</div>
<div class="t" style="left:1676px;top:838px">Ze...</div>
<div class="t" style="left:1711px;top:838px">Unterdrückungszus...</div>
<!-- bottom tabs -->
<div class="a" style="left:6px;top:960px;width:65px;height:21px;background:#252526;border:1px solid #3f3f46;border-top:none"></div>
<div class="t" style="left:12px;top:963px;color:#3399ff">Fehlerliste</div>
<div class="t" style="left:77px;top:963px">Ausgabe</div>
<div class="t" style="left:135px;top:963px">IntelliCode-Vorschläge</div>


<!-- ============ STATUS BAR ============ -->
<div class="a" style="left:0;top:987px;width:1920px;height:23px;background:#0078d9"></div>
<svg style="left:4px;top:992px" width="17" height="13" viewBox="0 0 17 13"><path d="M4 1 H16 L13 12 H1 Z" fill="none" stroke="#fff" stroke-width="1.2"/></svg>
<div class="t" style="left:28px;top:992px;color:#fff">Bereit</div>
<svg style="left:1637px;top:993px" width="11" height="13" viewBox="0 0 11 13"><path d="M5 3 V12.5" stroke="#e8e8e8" stroke-width="2"/><path d="M0.8 5.8 L5 1.2 L9.2 5.8" fill="none" stroke="#e8e8e8" stroke-width="1.8"/></svg>
<div class="t" style="left:1656px;top:992px;color:#fff">Zur Quellcodeverwaltung hinzufügen</div>
<svg style="left:1858px;top:996px" width="9" height="5"><path d="M0 4.5 H9 L4.5 0 Z" fill="#fff"/></svg>
<svg style="left:1887px;top:990px" width="15" height="16" viewBox="0 0 15 16"><path d="M7.5 1 C4 1 3 3.5 3 7 V10 L1 12 V13 H14 V12 L12 10 V7 C12 3.5 11 1 7.5 1 Z" fill="#dcdcdc"/><path d="M5.5 14 A2 2 0 0 0 9.5 14 Z" fill="#dcdcdc"/></svg>

<!-- ============ TASKBAR ============ -->
<div class="a" style="left:0;top:1010px;width:1920px;height:70px;background:linear-gradient(90deg,#1b2a4a 0px,#1b2a4a 48px,#3c2a54 340px,#4c2a4e 480px,#552848 750px,#562846 1150px,#552a4a 1400px,#482a50 1560px,#30295a 1720px,#242858 1920px)"></div>
<svg style="left:16px;top:1037px" width="16" height="16" viewBox="0 0 16 16"><path d="M0 1.8 L6.1 0.9 V7 H0 Z M7.1 0.8 L16 0 V7 H7.1 Z M0 8.1 H6.1 V15.1 L0 14.2 Z M7.1 8.1 H16 V16 L7.1 15.2 Z" fill="#fff"/></svg>
<div class="a" style="left:48px;top:1010px;width:288px;height:70px;background:#f2f2f2;border-bottom:1px solid #b8b8b8;border-left:1px solid #d8d8d8"></div>
<svg style="left:58px;top:1035px" width="20" height="20" viewBox="0 0 20 20"><circle cx="12.3" cy="7.5" r="5.2" fill="none" stroke="#111" stroke-width="1.2"/><path d="M8.6 11.2 L2.3 17.5" stroke="#111" stroke-width="1.3"/></svg>
<div class="t" style="left:88px;top:1036px;color:#1a1a1a;font-size:14px;line-height:18px">Suchen</div>
<!-- task view -->
<svg style="left:351px;top:1036px" width="18" height="17" viewBox="0 0 18 17" shape-rendering="crispEdges"><g fill="#fff"><rect x="1" y="0" width="11" height="1.2"/><rect x="1" y="15" width="11" height="1.2"/><rect x="2" y="3" width="1.2" height="10"/><rect x="10" y="3" width="1.2" height="10"/><rect x="2" y="3" width="9" height="1.2"/><rect x="2" y="12" width="9" height="1.2"/><rect x="15" y="1" width="1.2" height="2"/><rect x="14" y="5" width="2.5" height="3"/><rect x="15" y="10" width="1.2" height="5"/></g></svg>
<!-- grips -->
<div class="a" style="left:390px;top:1022px;width:1px;height:16px;background:#8a7a8a"></div>
<div class="a" style="left:393px;top:1022px;width:1px;height:16px;background:#8a7a8a"></div>
<div class="a" style="left:390px;top:1061px;width:1px;height:6px;background:#8a7a8a"></div>
<div class="a" style="left:393px;top:1061px;width:1px;height:6px;background:#8a7a8a"></div>
<div class="a" style="left:1574px;top:1061px;width:1px;height:6px;background:#8a7a8a"></div>
<div class="a" style="left:1577px;top:1061px;width:1px;height:6px;background:#8a7a8a"></div>
<!-- start app icon -->
<svg style="left:419px;top:1021px" width="25" height="19" viewBox="0 0 25 19" shape-rendering="crispEdges"><rect width="25" height="19" fill="#000"/><text x="3" y="7" font-family="Liberation Sans" font-size="7" font-weight="bold" fill="#fff">Start</text>
<rect x="3" y="9" width="5" height="2" fill="#1ba1e2"/><rect x="10" y="9" width="5" height="2" fill="#339933"/><rect x="19" y="9" width="5" height="2" fill="#f09609"/>
<rect x="3" y="13" width="5" height="2" fill="#f04000"/><rect x="10" y="13" width="5" height="2" fill="#a200ff"/><rect x="19" y="13" width="5" height="2" fill="#1ba1e2"/>
<rect x="3" y="17" width="5" height="2" fill="#e671b8"/><rect x="10" y="17" width="2" height="2" fill="#e51400"/><rect x="14" y="17" width="2" height="2" fill="#1b58b8"/><rect x="19" y="17" width="3" height="2" fill="#00aba9"/></svg>
<!-- mail -->
<svg style="left:467px;top:1018px" width="26" height="24" viewBox="0 0 26 24"><path d="M1 8 L13 0.5 L25 8 Z" fill="#0a62c9"/><rect x="1" y="8" width="24" height="15.5" fill="#1b9ef0"/><path d="M13 15 L25 8 V23.5 Z" fill="#10bff9"/><path d="M1 23.5 L13 15 L25 23.5 Z" fill="#0b8fe9"/><path d="M3.5 8 H22.5 L13 14.5 Z" fill="#f2f2f2"/></svg>
<!-- downloads -->
<svg style="left:515px;top:1019px" width="23" height="22" viewBox="0 0 23 22"><rect x="0.5" y="0.5" width="21.5" height="20.5" fill="#f4f4f4" stroke="#dcdcdc"/><path d="M8.5 3 H14.5 V10 H18.5 L11.5 17.5 L4.5 10 H8.5 Z" fill="#2b6fc4"/></svg>
<div class="t" style="left:543px;top:1022px;color:#fff;font-size:11.75px;line-height:16px">Downloads</div>
<div class="a" style="left:509px;top:1047px;width:156px;height:2px;background:#5a9ee6"></div>
<!-- store -->
<svg style="left:677px;top:1018px" width="25" height="25" viewBox="0 0 25 25"><path d="M7 6 V3 Q7 1 9 1 H16 Q18 1 18 3 V6" fill="none" stroke="#1a9ae8" stroke-width="1.8"/><rect x="1" y="5" width="23" height="19" rx="2.5" fill="#f5f5f5"/><rect x="1" y="21" width="23" height="3" rx="1.5" fill="#d8d8d8"/><rect x="7.5" y="9.5" width="4.5" height="4.5" fill="#f35325"/><rect x="13" y="9.5" width="4.5" height="4.5" fill="#81bc06"/><rect x="7.5" y="15" width="4.5" height="4.5" fill="#05a6f0"/><rect x="13" y="15" width="4.5" height="4.5" fill="#ffba08"/></svg>
<!-- edge -->
<svg style="left:726px;top:1017px" width="26" height="26" viewBox="0 0 26 26"><defs><linearGradient id="eg" x1="0" y1="0" x2="1" y2="1"><stop offset="0" stop-color="#35c1f1"/><stop offset=".6" stop-color="#1ba1e2"/><stop offset="1" stop-color="#66eb6e"/></linearGradient></defs>
<path d="M2 13 C2 5 8 1 13.5 1 C20 1 25 6 25 11.5 C25 15.5 21.5 17 19 17 C16 17 14 16 14 13.5 C14 11 16 10.5 15 8.5 C13 6 6 6.5 3.5 12 Z" fill="url(#eg)"/>
<path d="M2 13 C2 20 7.5 25 13.5 25 C17 25 20 24 22 22 C18 23 11 22 9.5 15.5 C8.5 11 12 8 15 8.5 C11 5 3 7 2 13 Z" fill="#0c59a4"/>
<circle cx="8" cy="19" r="5.3" fill="#a8a8a8" stroke="#e8e8e8" stroke-width="1"/><circle cx="8" cy="17.5" r="1.8" fill="#ececec"/><path d="M4.5 22 C5 19.5 11 19.5 11.5 22" fill="#ececec"/></svg>
<!-- whatsapp -->
<svg style="left:775px;top:1017px" width="26" height="26" viewBox="0 0 26 26"><path d="M13 2 C19.1 2 24 6.9 24 13 C24 19.1 19.1 24 13 24 C11 24 9.2 23.5 7.6 22.6 L2 24 L3.5 18.7 C2.5 17 2 15.1 2 13 C2 6.9 6.9 2 13 2 Z" fill="none" stroke="#25d366" stroke-width="2.2"/><path d="M9 7.5 C8 8 7.5 9.5 8 11 C9 14 11.5 16.8 15 18 C16.5 18.5 18 17.8 18.3 16.5 L16 15 L14.8 16 C13 15 11.5 13.5 10.5 11.7 L11.5 10.5 L10.3 7.7 Z" fill="#25d366"/></svg>
<!-- reader -->
<svg style="left:826px;top:1022px" width="22" height="16" viewBox="0 0 22 16" shape-rendering="crispEdges"><rect width="22" height="16" fill="#f0f0f0"/><rect x="1" y="1" width="20" height="14" fill="#d4d4d4"/><rect x="7" y="2" width="8" height="12" fill="#1f7ae0"/><g fill="#9a9a9a"><rect x="2" y="4" width="3" height="1"/><rect x="2" y="7" width="3" height="1"/><rect x="2" y="10" width="3" height="1"/><rect x="16" y="4" width="4" height="1"/><rect x="16" y="7" width="4" height="1"/><rect x="16" y="10" width="4" height="1"/></g></svg>
<!-- teams -->
<svg style="left:873px;top:1018px" width="26" height="24" viewBox="0 0 26 24"><circle cx="14" cy="4.5" r="3.5" fill="#7b83eb"/><circle cx="21.5" cy="6" r="2.7" fill="#5059c9"/><path d="M17 9 H25 V16 C25 18.5 23 20 21 20 C19 20 17 18.5 17 16 Z" fill="#5059c9"/><path d="M8 9 H20 V18 C20 21.5 17.5 23.5 14 23.5 C10.5 23.5 8 21.5 8 18 Z" fill="#7b83eb"/><rect x="1" y="7" width="12" height="12" rx="1" fill="#4b53bc"/><path d="M4 10 H10 M7 10 V16.5" stroke="#fff" stroke-width="1.8"/></svg>
<!-- unity hub -->
<svg style="left:922px;top:1018px" width="22" height="24" viewBox="0 0 22 24"><path d="M11 0.5 L21 6 V18 L11 23.5 L1 18 V6 Z" fill="#d8d8d8"/><path d="M11 4 L17.5 7.8 V15.8 L11 19.8 L4.5 15.8 V7.8 Z" fill="#3a3a3a"/><path d="M11 7 V12 L15.5 14.5 M11 12 L6.5 14.5 M8 9 L11 7 L14 9" fill="none" stroke="#e8e8e8" stroke-width="1.2"/></svg>
<div class="t" style="left:949px;top:1022px;color:#fff;font-size:11.75px;line-height:16px">Unity Hub 3.7.0</div>
<div class="a" style="left:915px;top:1047px;width:152px;height:2px;background:#5a9ee6"></div>
<!-- unity editor -->
<svg style="left:1083px;top:1019px" width="22" height="22" viewBox="0 0 22 22"><rect width="22" height="22" fill="#111"/><path d="M6 11 L13 6.5 L14 8 L16 6 L15.5 9 L14.5 11 L15.5 13 L16 16 L14 14 L13 15.5 Z M9 11 L13 8.8 L12 11 L13 13.2 Z" fill="#eee" fill-rule="evenodd"/></svg>
<div class="t" style="left:1110px;top:1022px;color:#fff;font-size:11.75px;line-height:16px">SpaceShooter - Ga...</div>
<div class="a" style="left:1076px;top:1047px;width:152px;height:2px;background:#5a9ee6"></div>
<!-- chrome -->
<svg style="left:1243px;top:1017px" width="27" height="27" viewBox="0 0 27 27"><circle cx="12" cy="12" r="11.5" fill="#db4437"/><path d="M12 12 L2 6.5 A11.5 11.5 0 0 0 12 23.5 Z" fill="#0f9d58"/><path d="M12 12 L22 6.5 A11.5 11.5 0 0 1 12 23.5 Z" fill="#f4b400"/><circle cx="12" cy="12" r="5" fill="#fff"/><circle cx="12" cy="12" r="4" fill="#4285f4"/><circle cx="19" cy="19" r="6.3" fill="#7fd8f0"/><circle cx="19" cy="19" r="4.5" fill="#e8692a"/></svg>
<div class="t" style="left:1271px;top:1022px;color:#fff;font-size:11.75px;line-height:16px">Startseite - gutefra...</div>
<div class="a" style="left:1237px;top:1047px;width:152px;height:2px;background:#5a9ee6"></div>
<!-- active VS -->
<div class="a" style="left:1394px;top:1010px;width:160px;height:39px;background:rgba(255,255,255,.2)"></div>
<svg style="left:1396px;top:1012px" width="40" height="36" viewBox="0 0 40 36"><path d="M8 23.5 L25.7 6.2 V13.5 L10.8 25 Z" fill="#b03cc0"/><path d="M8 12 L10.8 10.8 V25 L8 23.6 Z" fill="#9a2eb4"/><path d="M8 12 L10.8 10.8 L25.7 22.5 V29.7 Z" fill="#c858d2"/><path d="M25.7 6.2 L32 9 V26.7 L25.7 29.7 Z" fill="#e68cf0"/></svg>
<div class="t" style="left:1432px;top:1022px;color:#fff;font-size:11.75px;line-height:16px">SpaceShooter - Mic...</div>
<div class="a" style="left:1394px;top:1047px;width:160px;height:2px;background:#5a9ee6"></div>
<!-- second row -->
<div class="t" style="left:404px;top:1057px;color:#fff;font-size:11.75px;line-height:16px">Desktop</div>
<svg style="left:453px;top:1058px" width="18" height="12" viewBox="0 0 18 12"><path d="M4 11.5 C1.5 11.5 0.5 9.5 1 8 C1.5 6.5 3 6 4 6.3 C4.5 3 7 1 10 1 C13 1 15 3 15.3 5.5 C17 5.8 17.8 7.5 17.5 9 C17.2 10.5 16 11.5 14.5 11.5 Z" fill="#1490df"/><path d="M4 11.5 C1.5 11.5 0.5 9.5 1 8 C2 7 5 6.5 8 8 C11 9.5 15 9 17.5 9 C17.2 10.5 16 11.5 14.5 11.5 Z" fill="#0364b8"/></svg>
<div class="t" style="left:474px;top:1057px;color:#fff;font-size:11.75px;line-height:16px">OneDrive - Hohenstauf...</div>
<svg style="left:613px;top:1056px" width="18" height="16" viewBox="0 0 18 16"><rect x="3" y="0" width="15" height="16" rx="1" fill="#ca64ea"/><rect x="11" y="0" width="7" height="16" fill="#e3a5f5" opacity=".6"/><rect x="0" y="3" width="11" height="10" rx="1" fill="#7719aa"/><path d="M2.8 11 V5 L7.8 11 V5" fill="none" stroke="#fff" stroke-width="1.6"/></svg>
<div class="t" style="left:634px;top:1057px;color:#fff;font-size:11.75px;line-height:16px">OneNote</div>
<svg style="left:773px;top:1056px" width="18" height="17" viewBox="0 0 18 17"><rect x="4" y="1" width="13" height="15" rx="6" fill="#c42b3a"/><rect x="4" y="1" width="13" height="15" rx="6" fill="#e0434f" opacity=".7"/><rect x="0" y="3" width="11" height="11" rx="1" fill="#c21325"/><path d="M2.5 12 L5.5 5 L8.5 12 M3.8 9.5 H7.2" fill="none" stroke="#fff" stroke-width="1.5"/></svg>
<div class="t" style="left:794px;top:1057px;color:#fff;font-size:11.75px;line-height:16px">Access</div>
<svg style="left:933px;top:1056px" width="17" height="16" viewBox="0 0 17 16"><path d="M0.5 2 H6 L7.5 3.5 H16.5 V15 H0.5 Z" fill="#dcac3c"/><rect x="0.5" y="5" width="16" height="10" fill="#f6ca5a"/><path d="M5 15.5 V10 H12 V15.5 M7.5 15.5 V12.5 H9.5 V15.5" fill="none" stroke="#2b7bd6" stroke-width="1.8"/></svg>
<div class="t" style="left:954px;top:1057px;color:#fff;font-size:11.75px;line-height:16px">Bibliotheken</div>
<svg style="left:1093px;top:1055px" width="18" height="18" viewBox="0 0 18 18"><rect x="1" y="7" width="11" height="7" fill="#3fa0e8"/><rect x="5" y="14" width="3" height="2" fill="#888"/><rect x="3" y="16" width="7" height="1" fill="#aaa"/><circle cx="12" cy="6" r="5.5" fill="#5ab4f0"/><path d="M7 5 C9 3 11 7 14 4 C15 3 16 4 17 5" stroke="#7ad070" stroke-width="1.6" fill="none"/></svg>
<div class="t" style="left:1114px;top:1057px;color:#fff;font-size:11.75px;line-height:16px">Netzwerk</div>
<svg style="left:1254px;top:1058px" width="16" height="12" viewBox="0 0 16 12" shape-rendering="crispEdges"><rect width="16" height="12" fill="#3a96dd"/><rect x="1" y="1" width="14" height="10" fill="#7dc4f5"/><rect x="2" y="2" width="5" height="4" fill="#f5c842"/><rect x="8" y="3" width="6" height="1" fill="#fff"/><rect x="8" y="6" width="6" height="1" fill="#fff"/><rect x="2" y="8" width="12" height="1" fill="#fff"/></svg>
<div class="t" style="left:1274px;top:1057px;color:#fff;font-size:11.75px;line-height:16px">Systemsteuerung</div>
<div class="t" style="left:1549px;top:1052px;color:#fff;font-size:15px;line-height:14px">»</div>
<div class="t" style="left:1587px;top:1057px;color:#fff;font-size:11.75px;line-height:16px">Links</div>
<!-- tray -->
<svg style="left:1638px;top:1030px" width="30" height="28" viewBox="0 0 30 28"><path d="M12 2 C8 3 7 8 10 11 C13 14 17 12 18 10 C14 11 11 7 12 2 Z" fill="#f5b82a"/><path d="M6 24 C2.5 24 1 21.5 1.5 19.5 C2 17.5 4 16.5 6 17 C6.5 13 10 11 13.5 11.5 C16.5 12 18.5 14 19 16.5 C22 15.5 25 17.5 25 20.5 C25 22.5 23.5 24 21.5 24 Z" fill="#c8e2f8"/><path d="M6 24 C3 24 1.5 22 1.8 20.5 C6 22 18 22 25 20.5 C25 22.5 23.5 24 21.5 24 Z" fill="#8fc0ea"/></svg>
<div class="t" style="left:1672px;top:1037px;color:#fff;font-size:13px;line-height:16px">19°C</div>
<svg style="left:1726px;top:1039px" width="14" height="9" viewBox="0 0 14 9"><path d="M1 8 L7 1.5 L13 8" fill="none" stroke="#fff" stroke-width="1.3"/></svg>
<svg style="left:1751px;top:1037px" width="16" height="15" viewBox="0 0 16 15"><path d="M1 14 A13 13 0 0 1 14 1 M4 14 A10 10 0 0 1 14 4 M7 14 A7 7 0 0 1 14 7 M10 14 A4 4 0 0 1 14 10" fill="none" stroke="#fff" stroke-width="1"/><rect x="12.5" y="12.5" width="2" height="2" fill="#fff"/></svg>
<svg style="left:1773px;top:1037px" width="19" height="14" viewBox="0 0 19 14" shape-rendering="crispEdges"><rect x="4.5" y="4.5" width="13" height="8" fill="none" stroke="#fff"/><rect x="6" y="6" width="10" height="5" fill="#fff"/><rect x="17" y="7" width="2" height="3" fill="#fff"/><path d="M1 2 V6 H5 V2 M2 0 V2 M4 0 V2 M3 6 V8" fill="none" stroke="#fff"/></svg>
<div class="t" style="left:1816px;top:1016px;color:#fff;font-size:12.2px;line-height:14px;letter-spacing:-0.6px">21:12</div>
<div class="t" style="left:1805px;top:1038px;color:#fff;font-size:12.5px;line-height:14px">Mittwoch</div>
<div class="t" style="left:1804px;top:1058px;color:#fff;font-size:12.2px;line-height:14px;letter-spacing:-0.6px">18.09.2024</div>
<svg style="left:1878px;top:1036px" width="20" height="18" viewBox="0 0 20 18"><path d="M1 1 H19 V13 H12 L9 16.5 V13 H1 Z" fill="none" stroke="#fff" stroke-width="1.2"/></svg>

</body></html>
